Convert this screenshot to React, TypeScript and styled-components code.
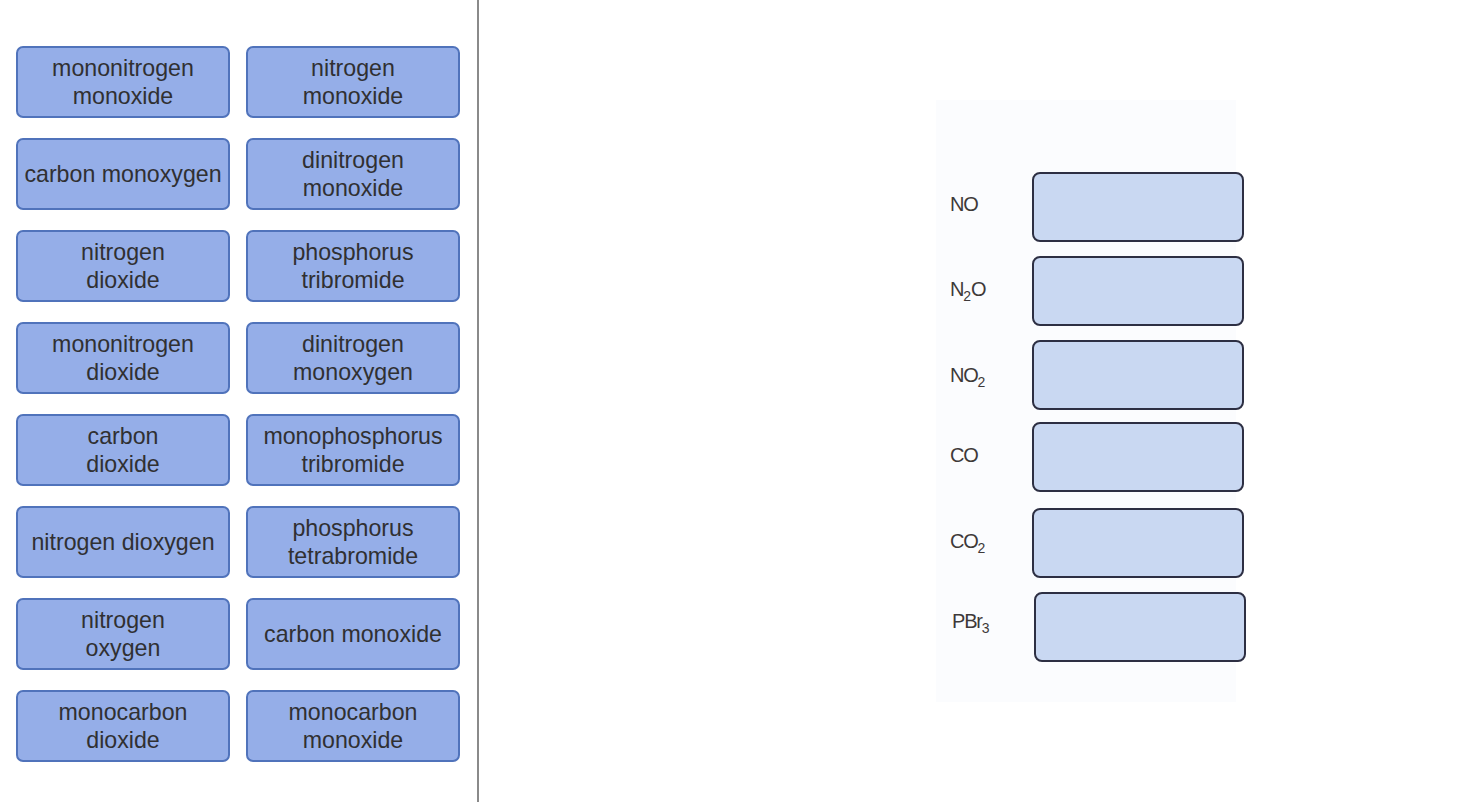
import styled, { createGlobalStyle } from "styled-components";

const GlobalStyle = createGlobalStyle`
  html, body {
    margin: 0;
    padding: 0;
    background: #ffffff;
  }
  body {
    font-family: "Liberation Sans", Arial, sans-serif;
  }
`;

// LAYOUT
const Page = styled.div`
  display: flex;
  height: 802px;
  overflow: hidden;
`;

const Bank = styled.div`
  width: 479px;
  flex-shrink: 0;
  border-right: 2px solid #8a8a8a;
  padding: 46px 0 0 16px;
  box-sizing: border-box;
`;

const ChoiceGrid = styled.div`
  display: grid;
  grid-template-columns: 214px 214px;
  grid-auto-rows: 72px;
  column-gap: 16px;
  row-gap: 20px;
`;

const Choice = styled.div`
  display: flex;
  align-items: center;
  justify-content: center;
  text-align: center;
  box-sizing: border-box;
  background: #95aee8;
  border: 2px solid #5073bb;
  border-radius: 7px;
  color: #303032;
  font-size: 23.2px;
  line-height: 28px;
  white-space: pre-line;
`;

const Stage = styled.div`
  flex: 1;
  padding: 100px 0 0 457px;
`;

const Figure = styled.div`
  width: 300px;
  height: 602px;
  background: #fbfcfe;
  box-sizing: border-box;
  padding: 72px 0 0 14px;
  display: flex;
  flex-direction: column;
  gap: 14px;
`;

const Row = styled.div<{ $shift?: number; $nudge?: number }>`
  display: flex;
  align-items: center;
  height: 70px;
  padding-left: ${(p) => p.$shift ?? 0}px;
  margin-top: ${(p) => p.$nudge ?? 0}px;
`;

const Formula = styled.div<{ $lift?: number }>`
  width: 82px;
  flex-shrink: 0;
  font-family: "Liberation Sans", Arial, sans-serif;
  font-size: 20px;
  letter-spacing: -1.2px;
  color: #3e3939;
  margin-top: ${(p) => -(p.$lift ?? 6)}px;

  sub {
    font-size: 14px;
    letter-spacing: 0;
    vertical-align: -5px;
    line-height: 0;
  }
`;

const Target = styled.div`
  width: 212px;
  height: 70px;
  flex-shrink: 0;
  box-sizing: border-box;
  background: #c9d8f2;
  border: 2px solid #2d2f43;
  border-radius: 8px;
`;

const choices = [
  "mononitrogen\nmonoxide",
  "nitrogen\nmonoxide",
  "carbon monoxygen",
  "dinitrogen\nmonoxide",
  "nitrogen\ndioxide",
  "phosphorus\ntribromide",
  "mononitrogen\ndioxide",
  "dinitrogen\nmonoxygen",
  "carbon\ndioxide",
  "monophosphorus\ntribromide",
  "nitrogen dioxygen",
  "phosphorus\ntetrabromide",
  "nitrogen\noxygen",
  "carbon monoxide",
  "monocarbon\ndioxide",
  "monocarbon\nmonoxide",
];

export default function App() {
  return (
    <Page>
      <GlobalStyle />
      <Bank>
        <ChoiceGrid>
          {choices.map((c, i) => (
            <Choice key={i}>{c}</Choice>
          ))}
        </ChoiceGrid>
      </Bank>

      <Stage>
        <Figure>
          <Row>
            <Formula>NO</Formula>
            <Target />
          </Row>
          <Row>
            <Formula $lift={4}>
              N<sub>2</sub>O
            </Formula>
            <Target />
          </Row>
          <Row>
            <Formula $lift={0}>
              NO<sub>2</sub>
            </Formula>
            <Target />
          </Row>
          <Row $nudge={-2}>
            <Formula $lift={4}>CO</Formula>
            <Target />
          </Row>
          <Row $nudge={2}>
            <Formula $lift={4}>
              CO<sub>2</sub>
            </Formula>
            <Target />
          </Row>
          <Row $shift={2}>
            <Formula $lift={12}>
              PBr<sub>3</sub>
            </Formula>
            <Target />
          </Row>
        </Figure>
      </Stage>
    </Page>
  );
}
